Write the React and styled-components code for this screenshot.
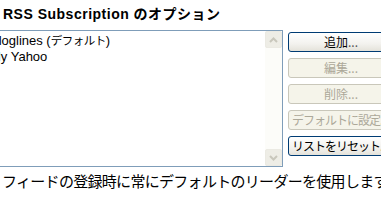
import React from "react";
import styled, { createGlobalStyle } from "styled-components";

const Global = createGlobalStyle`
  html, body { margin: 0; padding: 0; background: #ffffff; overflow: hidden; }
  body { font-family: "Liberation Sans", "Noto Sans CJK JP", sans-serif; color: #000; }
`;

const Page = styled.div`
  margin-left: -30px;
  width: 440px;
  display: flex;
  flex-direction: column;
`;

const Title = styled.h1`
  margin: 0;
  padding: 6px 0 0 33px;
  font: bold 14px/17px "Liberation Sans", "Noto Sans CJK JP", sans-serif;
  letter-spacing: 0.5px;
  white-space: nowrap;
`;

const Row = styled.div`
  margin-top: 7px;
  display: flex;
  align-items: flex-start;
  gap: 5px;
`;

const ListBox = styled.div`
  box-sizing: border-box;
  width: 313px;
  height: 137px;
  border: 1px solid #7f9db9;
  background: #fff;
  display: flex;
`;

const Items = styled.ul`
  flex: 1;
  margin: 0;
  list-style: none;
  padding: 2px 0 0 19px;
`;

const Item = styled.li`
  height: 16px;
  font: 13px/16px "Liberation Sans", "Noto Sans CJK JP", sans-serif;
  white-space: nowrap;
`;

const Kana = styled.span`
  font-size: 11.5px;
  letter-spacing: -0.5px;
`;

const Scrollbar = styled.div`
  width: 17px;
  display: flex;
  flex-direction: column;
  justify-content: space-between;
  background: #fcfcf9;
`;

const ScrollBtn = styled.div`
  box-sizing: border-box;
  width: 17px;
  height: 17px;
  border: 1px solid #ebeae3;
  border-radius: 2px;
  background: #eeede6;
  display: flex;
  align-items: center;
  justify-content: center;
`;

const ButtonCol = styled.div`
  margin-top: 2px;
  display: flex;
  flex-direction: column;
  gap: 6px;
`;

const Button = styled.button`
  box-sizing: border-box;
  width: 106px;
  height: 20px;
  padding: 0;
  display: flex;
  align-items: center;
  justify-content: center;
  white-space: nowrap;
  overflow: visible;
  border-radius: 3px;
  font: 12px/18px "Noto Sans CJK JP", sans-serif;
  letter-spacing: ${(p) => (p.$tight ? "-1px" : "0")};
  border: 1px solid ${(p) => (p.disabled ? "#c9c7ba" : "#003c74")};
  background: ${(p) =>
    p.disabled ? "#f5f4ea" : "linear-gradient(#ffffff, #f3f2ee 60%, #e4e2da)"};
  color: ${(p) => (p.disabled ? "#aca899" : "#000")};
`;

const Dots = styled.span`
  letter-spacing: 0;
  color: ${(p) => (p.$muted ? "inherit" : "#555")};
`;

const CheckRow = styled.label`
  margin-top: 5px;
  padding-left: 10px;
  display: flex;
  align-items: center;
  gap: 9px;
  height: 18px;
  font: 15px/18px "Noto Sans CJK JP", sans-serif;
  letter-spacing: -0.7px;
  white-space: nowrap;
`;

const Box = styled.span`
  box-sizing: border-box;
  width: 13px;
  height: 13px;
  border: 1px solid #1c5180;
  background: #fff;
  flex: none;
`;

const Arrow = ({ up }) => (
  <svg width="9" height="6" viewBox="0 0 9 6">
    <path
      d={up ? "M1 5 L4.5 1.5 L8 5" : "M1 1 L4.5 4.5 L8 1"}
      fill="none"
      stroke="#c9c7bc"
      strokeWidth="2"
    />
  </svg>
);

export default function App() {
  return (
    <>
      <Global />
      <Page>
        <Title>RSS Subscription のオプション</Title>
        <Row>
          <ListBox>
            <Items>
              <Item>
                Bloglines (<Kana>デフォルト</Kana>)
              </Item>
              <Item>My Yahoo</Item>
            </Items>
            <Scrollbar>
              <ScrollBtn>
                <Arrow up />
              </ScrollBtn>
              <ScrollBtn>
                <Arrow />
              </ScrollBtn>
            </Scrollbar>
          </ListBox>
          <ButtonCol>
            <Button>
              追加<Dots>...</Dots>
            </Button>
            <Button disabled>
              編集<Dots $muted>...</Dots>
            </Button>
            <Button disabled>
              削除<Dots $muted>...</Dots>
            </Button>
            <Button disabled $tight>
              デフォルトに設定<Dots $muted>...</Dots>
            </Button>
            <Button $tight>
              リストをリセット<Dots>...</Dots>
            </Button>
          </ButtonCol>
        </Row>
        <CheckRow>
          <Box />
          フィードの登録時に常にデフォルトのリーダーを使用します
        </CheckRow>
      </Page>
    </>
  );
}
